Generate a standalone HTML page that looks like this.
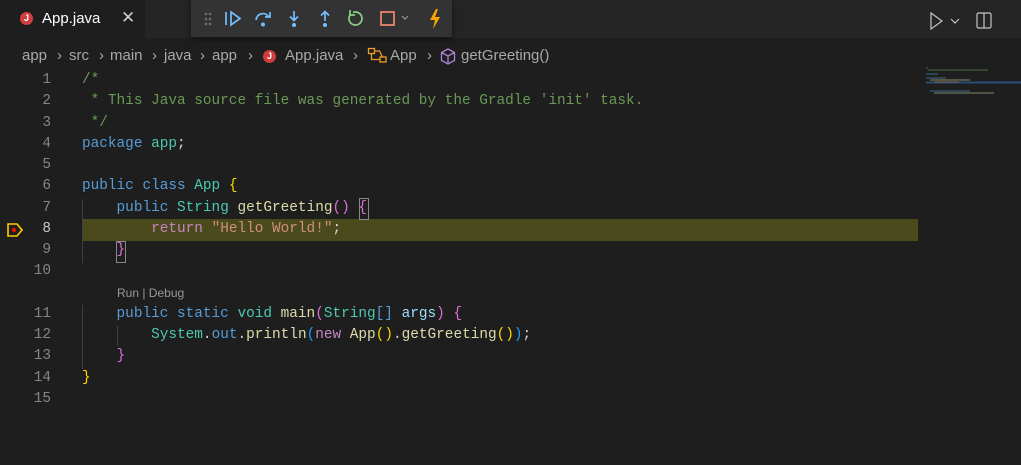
<!DOCTYPE html>
<html><head><meta charset="utf-8"><style>
*{margin:0;padding:0;box-sizing:border-box}
body{width:1021px;height:465px;background:#1e1e1e;overflow:hidden;position:relative;font-family:"Liberation Sans",sans-serif}
.tabbar{position:absolute;left:0;top:0;width:1021px;height:38px;background:#252526}
.tab{position:absolute;left:0;top:0;width:145px;height:38px;background:#1e1e1e;color:#fff;font-size:15px}
.jicon{display:inline-block;width:13px;height:13px;border-radius:50%;background:#d13c3c;color:#fff;font-size:9px;font-weight:bold;text-align:center;line-height:13px;position:absolute}
.tb{position:absolute;left:191px;top:0;width:261px;height:37px;background:#333333;box-shadow:0 2px 6px rgba(0,0,0,.5)}
.bc{position:absolute;top:47px;left:22px;font-size:15px;color:#a9a9a9;white-space:nowrap}
.bc span{position:absolute;top:0}
.code{position:absolute;left:0;top:70px;width:1021px;font-family:"Liberation Mono",monospace;font-size:14.4px}
.row{height:21.27px;line-height:21.27px;position:relative;white-space:pre}
.ln{position:absolute;left:0;width:51px;text-align:right;color:#858585}
.tx{position:absolute;left:82px}
.c{color:#6a9955}.k{color:#569cd6}.t{color:#4ec9b0}.f{color:#dcdcaa}.p{color:#da70d6}.y{color:#ffd700}.s{color:#ce9178}.r{color:#c586c0}.v{color:#9cdcfe}.w{color:#d4d4d4}.b{color:#179fff}
.guide{position:absolute;width:1px;background:#404040}
</style></head><body>
<div class="tabbar"></div>
<div class="tab"><span class="jicon" style="left:20px;top:12px">J</span><span style="position:absolute;left:42px;top:10px">App.java</span><span style="position:absolute;left:121px;top:8px;font-size:17px;color:#ccc">✕</span></div>
<div class="tb">
<svg width="261" height="37" viewBox="0 0 261 37" fill="none" stroke-width="1.7">
<g fill="#6e6e6e"><circle cx="15" cy="14" r="1.3"/><circle cx="19" cy="14" r="1.3"/><circle cx="15" cy="19" r="1.3"/><circle cx="19" cy="19" r="1.3"/><circle cx="15" cy="24" r="1.3"/><circle cx="19" cy="24" r="1.3"/></g>
<path d="M35 12v13M40 12l9 6.5-9 6.5z" stroke="#75beff"/>
<path d="M65 20a7 7 0 0 1 13-3M79 12v5h-5" stroke="#75beff"/><circle cx="72" cy="24.5" r="2" fill="#75beff"/>
<path d="M103 11v9M99 16.5l4 4 4-4" stroke="#75beff"/><circle cx="103" cy="25" r="2" fill="#75beff"/>
<path d="M134 21v-9M130 15.5l4-4 4 4" stroke="#75beff"/><circle cx="134" cy="25" r="2" fill="#75beff"/>
<path d="M159 15a6.5 6.5 0 1 0 3-2.5M159 10v5h5" stroke="#89d185"/>
<rect x="190" y="12" width="13" height="13" stroke="#f48771"/>
<path d="M211 16l3 3 3-3" stroke="#999" stroke-width="1.2"/>
<path d="M245 9l-6 11h5l-2 9 7-12h-5l3-8z" fill="#ffa500" stroke="none"/>
</svg></div>
<svg style="position:absolute;left:925px;top:10px" width="90" height="22" fill="none" stroke="#c5c5c5" stroke-width="1.2">
<path d="M6 3l11 8-11 8z"/><path d="M26 9l4 4 4-4"/><rect x="52" y="3" width="14" height="15" rx="1.5"/><path d="M59 3v15"/>
</svg>
<div class="bc">
<span style="left:0">app</span><span style="left:35px">›</span><span style="left:47px">src</span><span style="left:77px">›</span><span style="left:88px">main</span><span style="left:130px">›</span><span style="left:142px">java</span><span style="left:178px">›</span><span style="left:190px">app</span><span style="left:226px">›</span>
<span class="jicon" style="left:241px;top:3px">J</span><span style="left:263px">App.java</span><span style="left:331px">›</span>
<span style="left:368px">App</span><span style="left:405px">›</span>
<span style="left:439px">getGreeting()</span>
</div>
<svg style="position:absolute;left:367px;top:47px" width="22" height="18" fill="none" stroke="#ee9d28" stroke-width="1.3"><rect x="1.5" y="1.5" width="6" height="5"/><rect x="13" y="10" width="6" height="5"/><path d="M4.5 6.5v6h8.5M7.5 4h5l3 6"/></svg>
<svg style="position:absolute;left:440px;top:48px" width="16" height="17" fill="none" stroke="#b180d7" stroke-width="1.3"><path d="M8 1l6.5 3.5v8L8 16 1.5 12.5v-8zM1.5 4.5L8 8l6.5-3.5M8 8v8"/></svg>
<div style="position:absolute;left:82px;top:219px;width:836px;height:22px;background:#4b4a1c"></div>
<div class="guide" style="left:82px;top:199px;height:64px"></div>
<div class="guide" style="left:82px;top:305px;height:64px"></div>
<div class="guide" style="left:117px;top:326px;height:20px"></div>
<div style="position:absolute;left:359px;top:198px;width:10px;height:22px;border:1px solid #888"></div>
<div style="position:absolute;left:116px;top:241px;width:10px;height:22px;border:1px solid #888"></div>
<svg style="position:absolute;left:6px;top:222px" width="18" height="16"><path d="M2 2h9l5 6-5 6H2z" fill="none" stroke="#ffcc00" stroke-width="1.6"/><circle cx="8" cy="8" r="2.2" fill="#e51400"/></svg>
<div class="code">
<div class="row"><span class="ln">1</span><span class="tx c">/*</span></div>
<div class="row"><span class="ln">2</span><span class="tx c"> * This Java source file was generated by the Gradle 'init' task.</span></div>
<div class="row"><span class="ln">3</span><span class="tx c"> */</span></div>
<div class="row"><span class="ln">4</span><span class="tx"><span class="k">package</span> <span class="t">app</span><span class="w">;</span></span></div>
<div class="row"><span class="ln">5</span></div>
<div class="row"><span class="ln">6</span><span class="tx"><span class="k">public class</span> <span class="t">App</span> <span class="y">{</span></span></div>
<div class="row"><span class="ln">7</span><span class="tx">    <span class="k">public</span> <span class="t">String</span> <span class="f">getGreeting</span><span class="p">()</span> <span class="p">{</span></span></div>
<div class="row"><span class="ln" style="color:#c6c6c6">8</span><span class="tx">        <span class="r">return</span> <span class="s">"Hello World!"</span><span class="w">;</span></span></div>
<div class="row"><span class="ln">9</span><span class="tx">    <span class="p">}</span></span></div>
<div class="row"><span class="ln">10</span></div>
<div class="row"><span style="position:absolute;left:117px;font-family:'Liberation Sans',sans-serif;font-size:12px;color:#999">Run | Debug</span></div>
<div class="row"><span class="ln">11</span><span class="tx">    <span class="k">public static</span> <span class="t">void</span> <span class="f">main</span><span class="p">(</span><span class="t">String</span><span class="k">[]</span> <span class="v">args</span><span class="p">)</span> <span class="p">{</span></span></div>
<div class="row"><span class="ln">12</span><span class="tx">        <span class="t">System</span><span class="w">.</span><span class="k">out</span><span class="w">.</span><span class="f">println</span><span class="b">(</span><span class="r">new</span> <span class="f">App</span><span class="y">()</span><span class="w">.</span><span class="f">getGreeting</span><span class="y">()</span><span class="b">)</span><span class="w">;</span></span></div>
<div class="row"><span class="ln">13</span><span class="tx">    <span class="p">}</span></span></div>
<div class="row"><span class="ln">14</span><span class="tx"><span class="y">}</span></span></div>
<div class="row"><span class="ln">15</span></div>
</div>
<svg style="position:absolute;left:926px;top:66px" width="95" height="30">
<g stroke-width="1"><path d="M0 2h2M2 4h60" stroke="#4d6b3e"/><path d="M0 8h12" stroke="#3d6a8a"/><path d="M0 12h20" stroke="#3d6a8a"/><path d="M4 14h40" stroke="#8a8a6a"/><path d="M0 16.5h95" stroke="#264f78" stroke-width="2"/><path d="M8 16h25" stroke="#8a6a5a"/><path d="M4 25h40" stroke="#3d6a8a"/><path d="M8 27h60" stroke="#7a8a6a"/></g>
</svg>
</body></html>
